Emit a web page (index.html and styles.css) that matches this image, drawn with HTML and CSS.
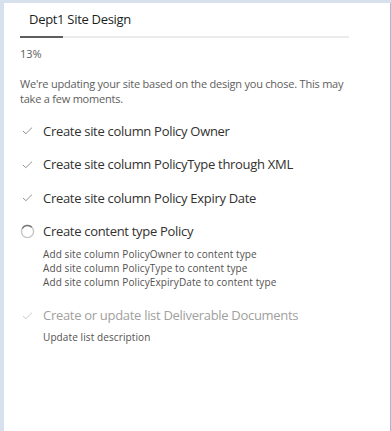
FILE: index.html
```html
<!DOCTYPE html>
<html>
<head>
<meta charset="utf-8">
<link rel="stylesheet" href="styles.css">
</head>
<body>
<div class="frame">
  <div class="panel">
    <div class="title">Dept1 Site Design</div>
    <div class="track"><div class="fill" style="width:13%"></div></div>
    <div class="pct">13%</div>
    <p class="desc">We're updating your site based on the design you chose. This may take a few moments.</p>
    <ul class="steps">
      <li class="step done">
        <div class="row"><svg class="ico" viewBox="0 0 12 12"><path d="M1 6.5 L4.2 9.5 L11 2.8" fill="none" stroke="#8a8886" stroke-width="1"/></svg><span>Create site column Policy Owner</span></div>
      </li>
      <li class="step done">
        <div class="row"><svg class="ico" viewBox="0 0 12 12"><path d="M1 6.5 L4.2 9.5 L11 2.8" fill="none" stroke="#8a8886" stroke-width="1"/></svg><span>Create site column PolicyType through XML</span></div>
      </li>
      <li class="step done">
        <div class="row"><svg class="ico" viewBox="0 0 12 12"><path d="M1 6.5 L4.2 9.5 L11 2.8" fill="none" stroke="#8a8886" stroke-width="1"/></svg><span>Create site column Policy Expiry Date</span></div>
      </li>
      <li class="step active">
        <div class="row"><svg class="ico spin" viewBox="0 0 16 16"><circle cx="8" cy="8" r="6.5" fill="none" stroke="#c8c6c4" stroke-width="1.5"/><path d="M2.4 4.8 A6.5 6.5 0 0 1 12.6 3.4" fill="none" stroke="#797775" stroke-width="1.5"/></svg><span>Create content type Policy</span></div>
        <ul class="subs">
          <li>Add site column PolicyOwner to content type</li>
          <li>Add site column PolicyType to content type</li>
          <li>Add site column PolicyExpiryDate to content type</li>
        </ul>
      </li>
      <li class="step pending">
        <div class="row"><svg class="ico" viewBox="0 0 12 12"><path d="M1 6.5 L4.2 9.5 L11 2.8" fill="none" stroke="#c8c6c4" stroke-width="1"/></svg><span>Create or update list Deliverable Documents</span></div>
        <ul class="subs">
          <li>Update list description</li>
        </ul>
      </li>
    </ul>
  </div>
</div>
</body>
</html>
```
FILE: styles.css
```css
html, body {
  margin: 0;
  padding: 0;
  height: 100%;
}
body {
  background: #d7e1ee;
  font-family: "Open Sans", "Noto Sans", sans-serif;
}
.frame {
  height: 100%;
  box-sizing: border-box;
  padding: 3px 0 0 4px;
}
.panel {
  background: #fff;
  height: 100%;
  box-sizing: border-box;
  border-right: 1px solid #a9b9cf;
  padding: 7px 0 0 16px;
}
.title {
  font-size: 13px;
  letter-spacing: -0.3px;
  color: #201f1e;
  padding-left: 9px;
  height: 22px;
  line-height: 18px;
}
.track {
  width: 329px;
  height: 2px;
  background: #ebebeb;
  margin-top: 4px;
}
.fill {
  height: 2px;
  background: #605e5c;
}
.pct {
  margin-top: 8px;
  font-size: 11px;
  color: #605e5c;
  line-height: 15px;
}
.desc {
  margin: 15px 0 0 0;
  font-size: 11px;
  letter-spacing: -0.22px;
  line-height: 15px;
  color: #605e5c;
  width: 340px;
}
.steps {
  list-style: none;
  margin: 14.5px 0 0 0;
  padding: 0;
}
.step {
  margin-bottom: 13.5px;
}
.row {
  display: flex;
  align-items: center;
  height: 20px;
  font-size: 13px;
  letter-spacing: -0.3px;
  color: #323130;
}
.ico {
  width: 11px;
  height: 11px;
  margin-left: 2px;
  margin-right: 10px;
  flex: none;
}
.spin {
  width: 15px;
  height: 15px;
  margin-left: 0;
  margin-right: 8px;
}
.pending .row {
  color: #a19f9d;
}
.active {
  margin-bottom: 16px;
}
.subs {
  list-style: none;
  margin: 6px 0 0 23px;
  padding: 0;
  font-size: 10px;
  letter-spacing: 0.1px;
  line-height: 14px;
  color: #53514f;
}
.pending .subs {
  margin-top: 5px;
}
```
